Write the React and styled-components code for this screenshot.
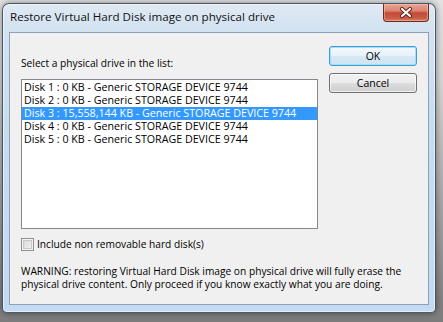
import React from 'react';
import styled, { createGlobalStyle } from 'styled-components';

const GlobalStyle = createGlobalStyle`
  html, body {
    margin: 0;
    padding: 0;
  }
  body {
    font-family: "Open Sans", "Noto Sans", sans-serif;
    color: #000;
  }
`;

const disks = [
  'Disk 1 : 0 KB - Generic STORAGE DEVICE 9744',
  'Disk 2 : 0 KB - Generic STORAGE DEVICE 9744',
  'Disk 3 : 15,558,144 KB - Generic STORAGE DEVICE 9744',
  'Disk 4 : 0 KB - Generic STORAGE DEVICE 9744',
  'Disk 5 : 0 KB - Generic STORAGE DEVICE 9744',
];

const App = () => {
  return (
    <Desktop>
      <GlobalStyle />
      <Window>
        <TitleBar>
          <Title>Restore Virtual Hard Disk image on physical drive</Title>
          <CloseButton aria-label="Close">
            <svg width="14" height="11" viewBox="0 0 14 11">
              <path d="M3 2 L11 9 M11 2 L3 9" stroke="#5a1f17" strokeWidth="4" strokeLinecap="round" />
              <path d="M3 2 L11 9 M11 2 L3 9" stroke="#ffffff" strokeWidth="2.2" strokeLinecap="round" />
            </svg>
          </CloseButton>
        </TitleBar>
        <Client>
          <TopRow>
            <ListColumn>
              <Label>Select a physical drive in the list:</Label>
              <ListBox>
                {disks.map((d, i) => (
                  <Item key={d} selected={i === 2}>{d}</Item>
                ))}
              </ListBox>
            </ListColumn>
            <Buttons>
              <Button primary>OK</Button>
              <Button>Cancel</Button>
            </Buttons>
          </TopRow>
          <CheckRow>
            <CheckBox />
            <span>Include non removable hard disk(s)</span>
          </CheckRow>
          <Warning>
            WARNING: restoring Virtual Hard Disk image on physical drive will fully erase the
            <br />
            physical drive content. Only proceed if you know exactly what you are doing.
          </Warning>
        </Client>
      </Window>
    </Desktop>
  );
};

const Desktop = styled.div`
  width: 443px;
  height: 322px;
  overflow: hidden;
  box-sizing: border-box;
  padding: 3px 0 0 2px;
  background: linear-gradient(180deg, #e4e4e4 0px, #d8d8d8 80px, #a9a9a9 200px, #7c7c7c 322px);
`;

const Window = styled.div`
  width: 434px;
  height: 310px;
  box-sizing: border-box;
  display: flex;
  flex-direction: column;
  padding: 0 6px 7px 6px;
  border: 1px solid rgba(30, 40, 55, 0.75);
  border-radius: 7px 7px 5px 5px;
  background: linear-gradient(180deg, #dfe9f3 0px, #d2e2f1 28px, #c8dcf0 120px, #c2daf2 100%);
  box-shadow: inset 0 0 0 1px rgba(255, 255, 255, 0.55), 0 0 7px rgba(0, 0, 0, 0.45);
`;

const TitleBar = styled.div`
  height: 28px;
  flex: none;
  display: flex;
  align-items: flex-start;
  justify-content: space-between;
`;

const Title = styled.div`
  margin: 5px 0 0 1px;
  font-size: 11.6px;
  line-height: 16px;
  color: #111;
  white-space: nowrap;
`;

const CloseButton = styled.div`
  width: 46px;
  height: 18px;
  box-sizing: border-box;
  display: flex;
  align-items: center;
  justify-content: center;
  border: 1px solid #6e2b22;
  border-top: none;
  border-radius: 0 0 4px 4px;
  background: linear-gradient(180deg, #e8a595 0%, #d98673 40%, #c54a37 52%, #c65a44 80%, #d67b62 100%);
  box-shadow: inset 0 0 0 1px rgba(255, 210, 200, 0.45);
`;

const Client = styled.div`
  flex: 1;
  display: flex;
  flex-direction: column;
  background: #f0f0f0;
  border: 1px solid #8ba0b9;
  padding: 13px 0 0 11px;
`;

const TopRow = styled.div`
  display: flex;
  align-items: flex-start;
  gap: 11px;
`;

const ListColumn = styled.div`
  display: flex;
  flex-direction: column;
`;

const Label = styled.div`
  margin-top: 10px;
  font-size: 10.2px;
  line-height: 14px;
  white-space: nowrap;
`;

const ListBox = styled.div`
  margin-top: 9px;
  width: 297px;
  height: 150px;
  box-sizing: border-box;
  border: 1px solid #828790;
  background: #fff;
  padding-top: 1px;
`;

const Item = styled.div`
  height: 13px;
  line-height: 13px;
  padding-left: 2px;
  font-size: 10.7px;
  white-space: nowrap;
  background: ${(p) => (p.selected ? '#3399ff' : 'transparent')};
  color: ${(p) => (p.selected ? '#fff' : '#000')};
`;

const Buttons = styled.div`
  display: flex;
  flex-direction: column;
  gap: 7px;
`;

const Button = styled.div`
  width: 88px;
  height: 20px;
  box-sizing: border-box;
  display: flex;
  align-items: center;
  justify-content: center;
  font-size: 10.5px;
  border-radius: 3px;
  border: 1px solid ${(p) => (p.primary ? '#3c9ed6' : '#707070')};
  background: ${(p) =>
    p.primary
      ? 'linear-gradient(180deg, #f4f9fc 0%, #e6f1f8 50%, #d6e9f5 51%, #cde4f3 100%)'
      : 'linear-gradient(180deg, #f2f2f2 0%, #ebebeb 50%, #dddddd 51%, #cfcfcf 100%)'};
  box-shadow: inset 0 0 0 1px ${(p) => (p.primary ? '#a8ddf7' : 'rgba(255,255,255,0.7)')};
`;

const CheckRow = styled.div`
  margin-top: 8px;
  display: flex;
  align-items: center;
  gap: 3px;
  font-size: 10.2px;
  line-height: 14px;
  white-space: nowrap;
`;

const CheckBox = styled.span`
  width: 13px;
  height: 13px;
  box-sizing: border-box;
  border: 1px solid #8f8f8f;
  background: linear-gradient(135deg, #d6d6d6 0%, #f4f4f4 100%);
  box-shadow: inset 0 0 0 1px #f4f4f4, inset 0 0 0 2px #c8c8c8;
`;

const Warning = styled.div`
  margin-top: 14px;
  font-size: 10.2px;
  line-height: 13px;
  white-space: nowrap;
`;

export default App;
